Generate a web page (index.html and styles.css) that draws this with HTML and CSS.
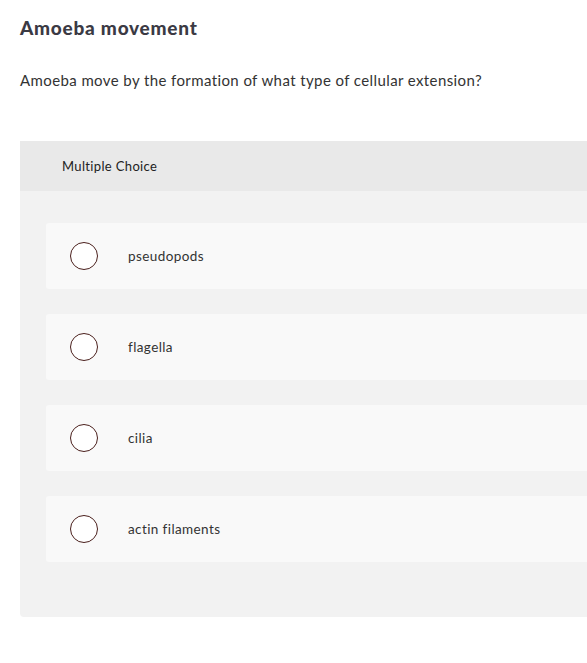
FILE: index.html
```html
<!DOCTYPE html>
<html>
<head>
<meta charset="utf-8">
<link rel="stylesheet" href="styles.css">
</head>
<body>
<div class="page">
  <h1 class="title">Amoeba movement</h1>
  <p class="question">Amoeba move by the formation of what type of cellular extension?</p>
  <div class="panel">
    <div class="panel-head">Multiple Choice</div>
    <div class="panel-body">
      <div class="option"><span class="radio"></span><span class="label">pseudopods</span></div>
      <div class="option"><span class="radio"></span><span class="label">flagella</span></div>
      <div class="option"><span class="radio"></span><span class="label">cilia</span></div>
      <div class="option"><span class="radio"></span><span class="label">actin filaments</span></div>
    </div>
  </div>
</div>
</body>
</html>
```

FILE: styles.css
```css
html, body {
  margin: 0;
  padding: 0;
  background: #ffffff;
  overflow: hidden;
}
.page {
  padding: 16px 0 0 20px;
  font-family: Lato, "Liberation Sans", sans-serif;
  width: 567px;
}
.title {
  margin: 0;
  font-size: 19px;
  font-weight: 900;
  color: #3b3a44;
  line-height: 24px;
  letter-spacing: 0.75px;
}
.question {
  margin: 29px 0 0 0;
  font-size: 15px;
  line-height: 22px;
  color: #333333;
  letter-spacing: 0.4px;
}
.panel {
  margin-top: 50px;
  background: #f2f2f2;
  border-radius: 0 0 0 4px;
}
.panel-head {
  height: 50px;
  background: #e9e9e9;
  display: flex;
  align-items: center;
  padding-left: 42px;
  font-size: 13px;
  color: #222222;
  letter-spacing: 0.35px;
}
.panel-body {
  padding: 32px 0 55px 26px;
  display: flex;
  flex-direction: column;
  gap: 25px;
}
.option {
  height: 66px;
  background: #f9f9f9;
  border-radius: 3px 0 0 3px;
  display: flex;
  align-items: center;
  padding-left: 24px;
}
.radio {
  width: 26px;
  height: 26px;
  border: 1.6px solid #4a1f1c;
  border-radius: 50%;
  background: #ffffff;
  flex: none;
}
.label {
  margin-left: 30px;
  font-size: 13.5px;
  color: #333333;
  letter-spacing: 0.4px;
}
```
